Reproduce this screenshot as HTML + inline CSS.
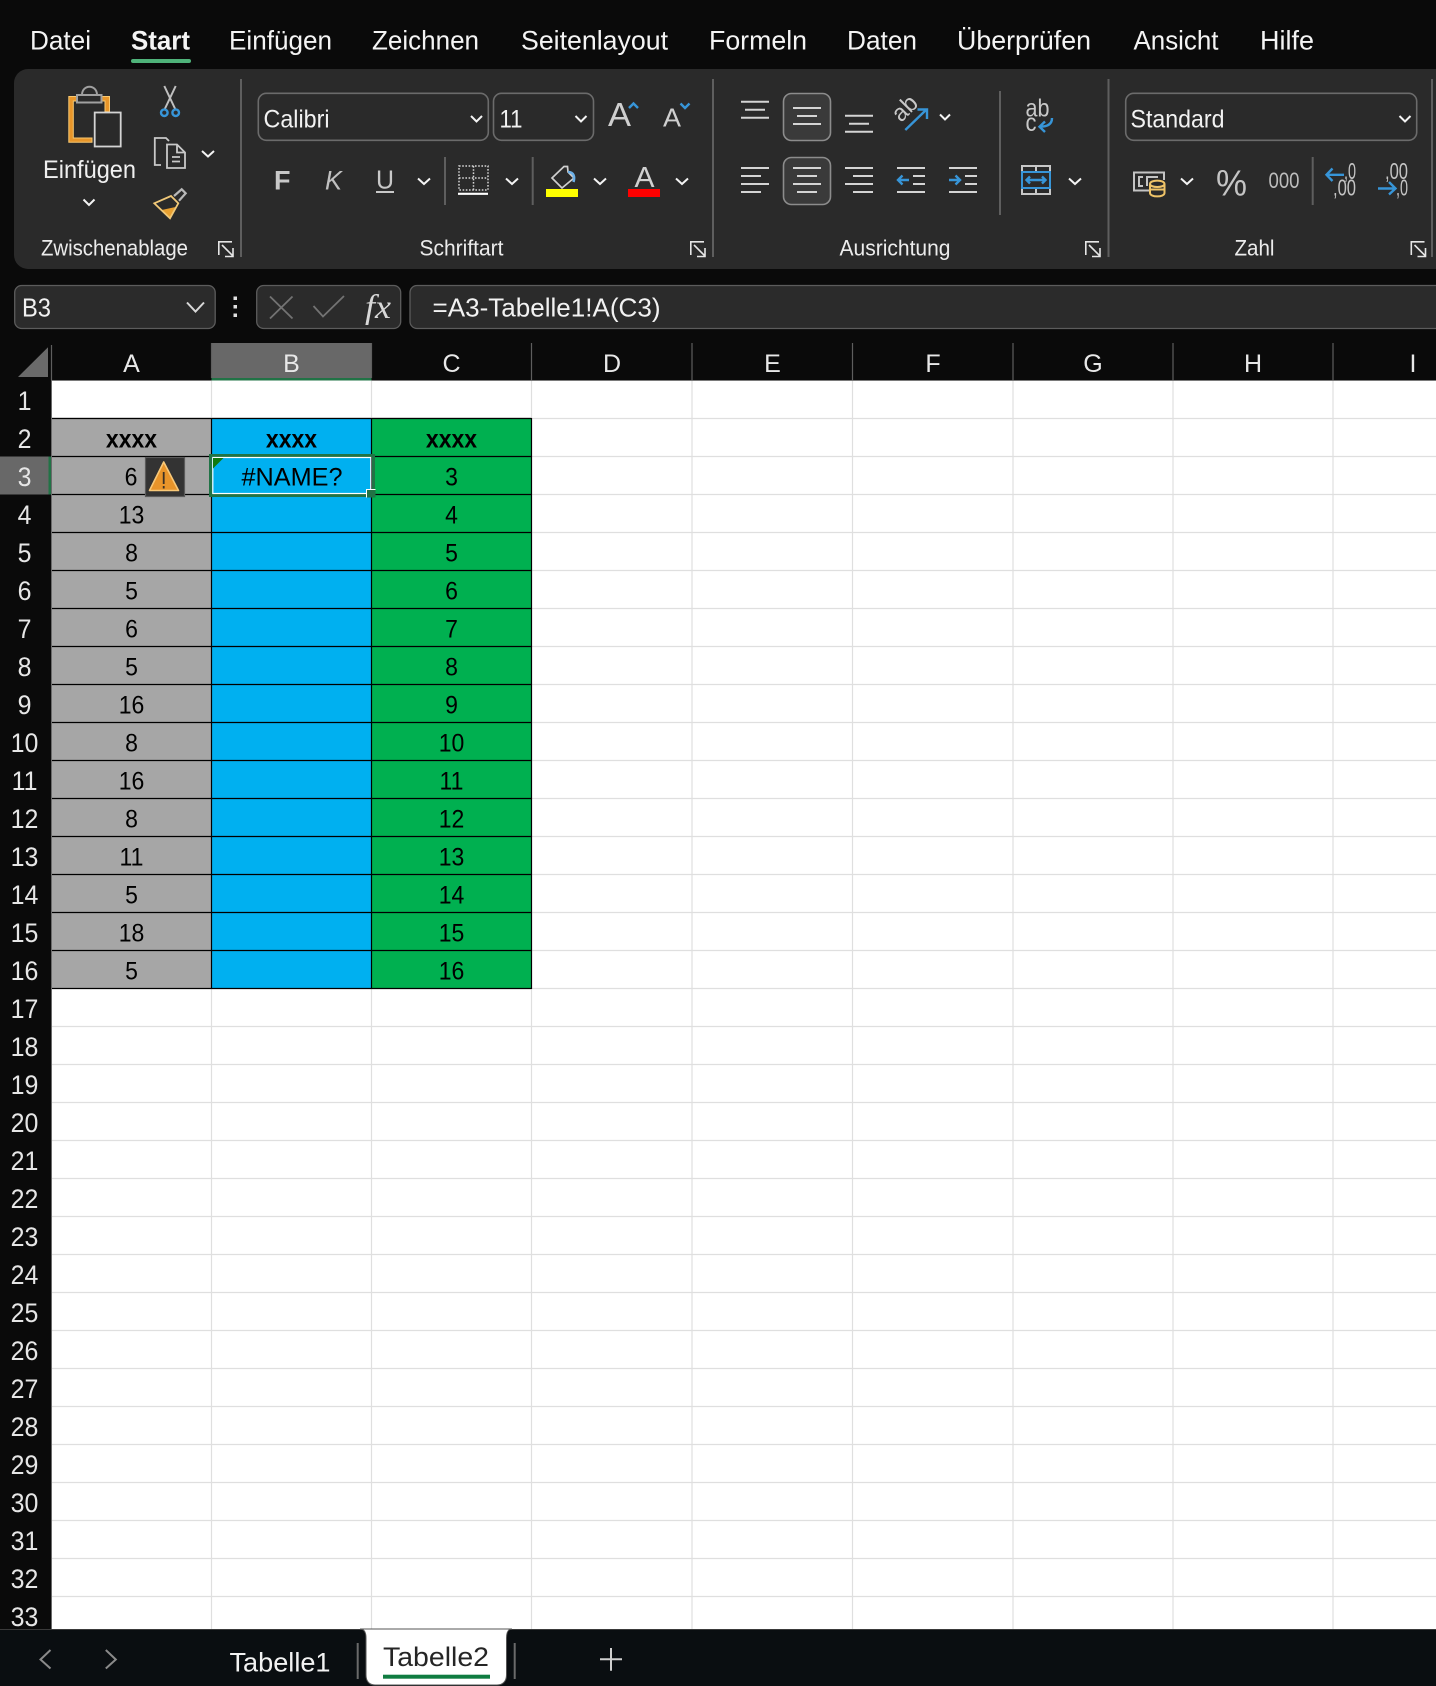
<!DOCTYPE html>
<html lang="de"><head><meta charset="utf-8"><title>Excel</title>
<style>
html,body{margin:0;padding:0;background:#0a0a0a;width:1436px;height:1686px;overflow:hidden}
svg{display:block}
text{font-family:"Liberation Sans",sans-serif}
.tab{font-size:27px;fill:#f4f4f4}
.lab{font-size:22px;fill:#ececec}
.inp{font-size:25px;fill:#f2f2f2}
.rh text{font-size:26.5px;fill:#e6e6e6;text-anchor:middle}
.ch text{font-size:25px;fill:#e8e8e8;text-anchor:middle}
.cell text{font-size:25px;fill:#000;text-anchor:middle}
.chev{fill:none;stroke:#f4f4f4;stroke-width:2}
.ln{fill:none;stroke:#d4d4d4;stroke-width:2}
.blue{fill:none;stroke:#3795d8;stroke-width:2.4}
.sep{stroke:#5e5e5e;stroke-width:2}
.box{fill:none;stroke:#6b6b6b;stroke-width:1.6}
.lc{fill:none;stroke:#e6e6e6;stroke-width:1.6}
</style></head>
<body>
<svg width="1436" height="1686" viewBox="0 0 1436 1686" xmlns="http://www.w3.org/2000/svg">
<rect width="1436" height="1686" fill="#0a0a0a"/>

<!-- Menu tabs -->
<text class="tab" x="30" y="49.500" textLength="61" lengthAdjust="spacingAndGlyphs">Datei</text>
<text class="tab" x="131" y="49.500" textLength="59" lengthAdjust="spacingAndGlyphs" style="font-weight:bold">Start</text>
<rect x="131" y="59" width="60" height="4" rx="2" fill="#4fb37a"/>
<text class="tab" x="229" y="49.500" textLength="103" lengthAdjust="spacingAndGlyphs">Einfügen</text>
<text class="tab" x="372" y="49.500" textLength="107" lengthAdjust="spacingAndGlyphs">Zeichnen</text>
<text class="tab" x="521" y="49.500" textLength="147" lengthAdjust="spacingAndGlyphs">Seitenlayout</text>
<text class="tab" x="709" y="49.500" textLength="98" lengthAdjust="spacingAndGlyphs">Formeln</text>
<text class="tab" x="847" y="49.500" textLength="70" lengthAdjust="spacingAndGlyphs">Daten</text>
<text class="tab" x="957" y="49.500" textLength="134" lengthAdjust="spacingAndGlyphs">Überprüfen</text>
<text class="tab" x="1133.500" y="49.500" textLength="85" lengthAdjust="spacingAndGlyphs">Ansicht</text>
<text class="tab" x="1260" y="49.500" textLength="54" lengthAdjust="spacingAndGlyphs">Hilfe</text>

<!-- Ribbon -->
<rect x="14" y="69" width="1450" height="200" rx="14" fill="#2a2a2a"/>
<path d="M241 79V257M713 79V257M1108.500 79V257M1432 79V257" stroke="#5e5e5e" stroke-width="2" fill="none"/>

<!-- Clipboard -->
<path d="M68.800 96.500H77V101H73.300V138H92V142.200H68.800Z M101 96.500H109.500V111.700H105V101H101Z" fill="#e8962a" stroke="#f8c870" stroke-width="1"/>
<path d="M82 95C82 84 97 84 97 95" fill="none" stroke="#a0a0a0" stroke-width="2"/>
<rect x="77" y="95" width="24.500" height="7.500" fill="#2a2a2a" stroke="#a0a0a0" stroke-width="2"/>
<rect x="94.700" y="112.500" width="26" height="34" fill="#2a2a2a" stroke="#d4d4d4" stroke-width="1.800"/>
<text x="43" y="178" style="font-size:25px;fill:#f0f0f0" textLength="93" lengthAdjust="spacingAndGlyphs">Einfügen</text>
<path class="chev" d="M83.500 199.500l5.500 5.500l5.500-5.500"/>
<!-- Scissors -->
<path d="M164.300 86L175.200 109M175.700 86L164.800 109" stroke="#c0c0c0" stroke-width="2" fill="none"/>
<circle cx="164.300" cy="112.700" r="3.300" fill="none" stroke="#3795d8" stroke-width="2.400"/>
<circle cx="175.700" cy="112.700" r="3.300" fill="none" stroke="#3795d8" stroke-width="2.400"/>
<!-- Copy -->
<path d="M161 165H154.800V138H166L169 141" fill="none" stroke="#c8c8c8" stroke-width="1.800"/>
<path d="M167 168V144.500H177L185 152.500V168Z M177 144.500V152.500H185" fill="none" stroke="#c8c8c8" stroke-width="1.800"/>
<path d="M172 157H180M172 161.500H180" stroke="#c8c8c8" stroke-width="1.800" fill="none"/>
<path class="chev" d="M202 151l6 5.500l6-5.500"/>
<!-- Painter -->
<path d="M161.700 210L176.700 206.700L170 218.300Z" fill="#e8a030"/>
<path d="M154.300 203.300L171 196L178.300 203.300L170 218.300Z" fill="none" stroke="#f0c878" stroke-width="1.800"/>
<path d="M174 196L181.700 189.300L185.700 193.300L179 200.700" fill="none" stroke="#b8b8b8" stroke-width="2.200"/>
<text class="lab" x="41" y="255.500" textLength="147" lengthAdjust="spacingAndGlyphs">Zwischenablage</text>
<g transform="translate(218 241)"><path class="lc" d="M.8 14V.8H14M4 4L15 15M15 7V15.500H7"/></g>

<!-- Font group -->
<rect class="box" x="258.300" y="93.300" width="230" height="47" rx="8"/>
<text class="inp" x="263.500" y="127.300" textLength="66" lengthAdjust="spacingAndGlyphs">Calibri</text>
<path class="chev" d="M471 116l5.500 5.500l5.500-5.500"/>
<rect class="box" x="493.500" y="93.300" width="100" height="47" rx="8"/>
<text class="inp" x="499.500" y="127.300" textLength="23" lengthAdjust="spacingAndGlyphs">11</text>
<path class="chev" d="M575.500 116l5.500 5.500l5.500-5.500"/>
<text x="608" y="126" style="font-size:33px;fill:#cfcfcf" textLength="23" lengthAdjust="spacingAndGlyphs">A</text>
<path class="blue" d="M629 108l4.500-4.500l4.500 4.500"/>
<text x="663" y="126.500" style="font-size:26px;fill:#cfcfcf" textLength="18" lengthAdjust="spacingAndGlyphs">A</text>
<path class="blue" d="M680.500 103.500l4.500 4.500l4.500-4.500"/>
<text x="274" y="189.300" style="font-size:27px;font-weight:bold;fill:#c8c8c8">F</text>
<text x="325" y="189.300" style="font-size:27px;font-style:italic;fill:#c0c0c0" textLength="17" lengthAdjust="spacingAndGlyphs">K</text>
<text x="376" y="188.500" style="font-size:26px;fill:#c8c8c8" textLength="18" lengthAdjust="spacingAndGlyphs">U</text>
<path d="M376 192H394" stroke="#c8c8c8" stroke-width="2"/>
<path class="chev" d="M418 178.500l6 5.500l6-5.500"/>
<path class="sep" d="M445 157V205M532.700 157V205M1312.700 157V205"/>
<path d="M459 166H488V190H459ZM473.500 166V190M459 178H488" fill="none" stroke="#d4d4d4" stroke-width="1.500" stroke-dasharray="1.600 1.600"/>
<path d="M458 193.800H488" stroke="#fff" stroke-width="2.200"/>
<path class="chev" d="M506 178.500l6 5.500l6-5.500"/>
<path d="M552 178L564 166.500L567.500 166.500L568 172L574 178L562 188Z" fill="none" stroke="#cfcfcf" stroke-width="1.700"/>
<path d="M568 172C574 172 575 177 573.500 182" fill="none" stroke="#6cb0e8" stroke-width="2.500"/>
<rect x="546" y="189" width="32" height="8" fill="#ffff00"/>
<path class="chev" d="M594 178.500l6 5.500l6-5.500"/>
<text x="634.500" y="187" style="font-size:29px;fill:#d0d0d0" textLength="20" lengthAdjust="spacingAndGlyphs">A</text>
<rect x="628" y="189" width="32" height="8" fill="#ff0000"/>
<path class="chev" d="M676 178.500l6 5.500l6-5.500"/>
<text class="lab" x="419.500" y="255.500" textLength="84" lengthAdjust="spacingAndGlyphs">Schriftart</text>
<g transform="translate(690 241)"><path class="lc" d="M.8 14V.8H14M4 4L15 15M15 7V15.500H7"/></g>

<!-- Alignment -->
<path class="ln" d="M741 101.700H769M745 109.700H765M741 117.700H769"/>
<rect x="783.500" y="93.500" width="47" height="47" rx="8" fill="#3a3a3a" stroke="#8c8c8c" stroke-width="1.600"/>
<path class="ln" d="M793 108H821M797 116H817M793 124H821"/>
<path class="ln" d="M845 115.700H873M849 123.700H869M845 131.700H873"/>
<text transform="translate(901 123) rotate(-45)" style="font-size:24px;fill:#c8c8c8" textLength="26" lengthAdjust="spacingAndGlyphs">ab</text>
<path class="blue" d="M905.300 130L926.500 109.500M917.500 109.500H927V119"/>
<path class="chev" d="M940 114.500l5 5l5-5"/>
<path class="sep" d="M1000 91V215"/>
<text x="1025.500" y="116.700" style="font-size:25px;fill:#c8c8c8" textLength="24" lengthAdjust="spacingAndGlyphs">ab</text>
<text x="1025.500" y="131" style="font-size:25px;fill:#c8c8c8" textLength="11" lengthAdjust="spacingAndGlyphs">c</text>
<path class="blue" d="M1052 118C1052 124 1048 126.700 1040 126.700M1045 121.500L1039.500 126.700L1045 132"/>
<path class="ln" d="M741 168H769M741 176H761M741 184H769M741 192H761"/>
<rect x="783.500" y="157.500" width="47" height="47" rx="8" fill="#3a3a3a" stroke="#8c8c8c" stroke-width="1.600"/>
<path class="ln" d="M793 168H821M797 176H817M793 184H821M797 192H817"/>
<path class="ln" d="M845 168H873M853 176H873M845 184H873M853 192H873"/>
<path class="ln" d="M897 168H925M913 176H925M913 184H925M897 192H925"/>
<path class="blue" d="M898 180H909M902.500 175.500L898 180L902.500 184.500"/>
<path class="ln" d="M949 168H977M965 176H977M965 184H977M949 192H977"/>
<path class="blue" d="M949 180H960M955.500 175.500L960 180L955.500 184.500"/>
<path d="M1022 166H1050V194H1022ZM1036 166V172M1036 188V194" fill="none" stroke="#c8c8c8" stroke-width="2"/>
<rect x="1022" y="172" width="28" height="16" fill="#2a2a2a" stroke="#3795d8" stroke-width="2"/>
<path class="blue" d="M1026.500 180H1045.500M1030 176.500L1026.500 180L1030 183.500M1042 176.500L1045.500 180L1042 183.500"/>
<path class="chev" d="M1069 178.500l6 5.500l6-5.500"/>
<text class="lab" x="839.500" y="255.500" textLength="111" lengthAdjust="spacingAndGlyphs">Ausrichtung</text>
<g transform="translate(1085 241)"><path class="lc" d="M.8 14V.8H14M4 4L15 15M15 7V15.500H7"/></g>

<!-- Number -->
<rect class="box" x="1125.700" y="93.300" width="291" height="47" rx="8"/>
<text class="inp" x="1130.500" y="127.300" textLength="94" lengthAdjust="spacingAndGlyphs">Standard</text>
<path class="chev" d="M1399.500 116l5.500 5.500l5.500-5.500"/>
<path d="M1150 190.500H1134V172.500H1164V180M1143 177H1139V186H1143M1147 186V177H1158" fill="none" stroke="#c4c4c4" stroke-width="2"/>
<path d="M1150 184C1150 179.500 1164.500 179.500 1164.500 184V193C1164.500 197.500 1150 197.500 1150 193ZM1150 184C1150 188 1164.500 188 1164.500 184M1150 189.500H1164.500" fill="#2a2a2a" stroke="#f0c468" stroke-width="2"/>
<path class="chev" d="M1181 178.500l6 5.500l6-5.500"/>
<text x="1216" y="195.500" style="font-size:36px;fill:#c4c4c4" textLength="31" lengthAdjust="spacingAndGlyphs">%</text>
<text x="1268.500" y="187.800" style="font-size:22px;fill:#bdbdbd" textLength="31" lengthAdjust="spacingAndGlyphs">000</text>
<path class="blue" d="M1326.500 174.800H1344M1332.500 168.500L1326.500 174.800L1332.500 181"/>
<text x="1344" y="179" style="font-size:23px;fill:#c4c4c4" textLength="12" lengthAdjust="spacingAndGlyphs">,0</text>
<text x="1333" y="195.500" style="font-size:23px;fill:#c4c4c4" textLength="23" lengthAdjust="spacingAndGlyphs">,00</text>
<text x="1385" y="179" style="font-size:23px;fill:#c4c4c4" textLength="23" lengthAdjust="spacingAndGlyphs">,00</text>
<path class="blue" d="M1378 188.500H1395M1389 182L1395.500 188.500L1389 194.500"/>
<text x="1396" y="195.500" style="font-size:23px;fill:#c4c4c4" textLength="12" lengthAdjust="spacingAndGlyphs">,0</text>
<text class="lab" x="1234.500" y="255.500" textLength="40" lengthAdjust="spacingAndGlyphs">Zahl</text>
<g transform="translate(1410.500 241)"><path class="lc" d="M.8 14V.8H14M4 4L15 15M15 7V15.500H7"/></g>

<!-- Formula bar -->
<rect x="14.700" y="285.500" width="200.500" height="43" rx="7" fill="#2b2b2b" stroke="#5c5c5c" stroke-width="1.300"/>
<text x="22" y="316.500" style="font-size:26px;fill:#f2f2f2" textLength="29" lengthAdjust="spacingAndGlyphs">B3</text>
<path d="M187 302.500L195.500 311.500L204 302.500" fill="none" stroke="#d8d8d8" stroke-width="2"/>
<rect x="233.500" y="296.500" width="3.500" height="3.500" fill="#e0e0e0"/><rect x="233.500" y="305" width="3.500" height="3.500" fill="#e0e0e0"/><rect x="233.500" y="313.500" width="3.500" height="3.500" fill="#e0e0e0"/>
<rect x="256.700" y="285.500" width="144" height="43" rx="7" fill="#2b2b2b" stroke="#5c5c5c" stroke-width="1.300"/>
<path d="M270 296.500L292.500 318.500M292.500 296.500L270 318.500M313.500 306L323 316.500L344 296" fill="none" stroke="#737373" stroke-width="1.800"/>
<text x="365" y="318" style="font-family:'Liberation Serif',serif;font-style:italic;font-size:34px;fill:#d8d8d8" textLength="26" lengthAdjust="spacingAndGlyphs">fx</text>
<rect x="410" y="285.500" width="1040" height="43" rx="7" fill="#2b2b2b" stroke="#5c5c5c" stroke-width="1.300"/>
<text x="432.500" y="316.500" style="font-size:26px;fill:#f2f2f2" textLength="228" lengthAdjust="spacingAndGlyphs">=A3-Tabelle1!A(C3)</text>

<!-- Sheet -->
<rect x="51.500" y="380" width="1385" height="1249" fill="#fff"/>
<rect x="51.500" y="418" width="160" height="570" fill="#a6a6a6"/>
<rect x="211.500" y="418" width="160" height="570" fill="#00b0f0"/>
<rect x="371.500" y="418" width="160" height="570" fill="#00b050"/>
<!-- grid -->
<path d="M531.500 418.500H1436M531.500 456.500H1436M531.500 494.500H1436M531.500 532.500H1436M531.500 570.500H1436M531.500 608.500H1436M531.500 646.500H1436M531.500 684.500H1436M531.500 722.500H1436M531.500 760.500H1436M531.500 798.500H1436M531.500 836.500H1436M531.500 874.500H1436M531.500 912.500H1436M531.500 950.500H1436M531.500 988.500H1436M52 1026.500H1436M52 1064.500H1436M52 1102.500H1436M52 1140.500H1436M52 1178.500H1436M52 1216.500H1436M52 1254.500H1436M52 1292.500H1436M52 1330.500H1436M52 1368.500H1436M52 1406.500H1436M52 1444.500H1436M52 1482.500H1436M52 1520.500H1436M52 1558.500H1436M52 1596.500H1436M52 418H531.500M211.500 380V418M371.500 380V418M531.500 380V418M211.500 988V1629M371.500 988V1629M531.500 988V1629M692 380V1629M852.500 380V1629M1013 380V1629M1173 380V1629M1333 380V1629" stroke="#dfdfdf" stroke-width="1.200" fill="none"/>
<path d="M51.500 418.500H531.500M51.500 456.500H531.500M51.500 494.500H531.500M51.500 532.500H531.500M51.500 570.500H531.500M51.500 608.500H531.500M51.500 646.500H531.500M51.500 684.500H531.500M51.500 722.500H531.500M51.500 760.500H531.500M51.500 798.500H531.500M51.500 836.500H531.500M51.500 874.500H531.500M51.500 912.500H531.500M51.500 950.500H531.500M51.500 988.500H531.500M211.500 418V989M371.500 418V989M531.500 418V989" stroke="#000" stroke-width="1.200" fill="none"/>

<!-- Column headers -->
<rect x="0" y="343" width="1436" height="37" fill="#0a0a0a"/>
<path d="M18 377H48V347.300Z" fill="#6a6a6a"/>
<rect x="211.500" y="343" width="160" height="35" fill="#686868"/>
<rect x="211.500" y="378" width="160" height="2.500" fill="#217346"/>
<path d="M51.500 345V380M211.500 343V378M371.500 343V378M531.500 343V380M692 343V380M852.500 343V380M1013 343V380M1173 343V380M1333 343V380" stroke="#5e5e5e" stroke-width="1.200" fill="none"/>
<path d="M0 380.500H211.500M371.500 380.500H1436" stroke="#7a7a7a" stroke-width="1"/>
<g class="ch">
<text x="131.500" y="372">A</text><text x="291.500" y="372">B</text><text x="451.500" y="372">C</text><text x="612" y="372">D</text><text x="772.500" y="372">E</text><text x="933" y="372">F</text><text x="1093" y="372">G</text><text x="1253" y="372">H</text><text x="1413" y="372">I</text>
</g>

<!-- Row headers -->
<rect x="0" y="380" width="51.500" height="1249" fill="#0a0a0a"/>
<rect x="0" y="456.500" width="48.500" height="38" fill="#686868"/>
<rect x="48.500" y="456.500" width="3" height="38" fill="#217346"/>
<path d="M51.500 380V1629" stroke="#6a6a6a" stroke-width="1"/>
<g class="rh" transform="translate(24.500 0) scale(.94 1)">
<text x="0" y="410">1</text><text x="0" y="448">2</text><text x="0" y="486">3</text><text x="0" y="524">4</text><text x="0" y="562">5</text><text x="0" y="600">6</text><text x="0" y="638">7</text><text x="0" y="676">8</text><text x="0" y="714">9</text><text x="0" y="752">10</text><text x="0" y="790">11</text><text x="0" y="828">12</text><text x="0" y="866">13</text><text x="0" y="904">14</text><text x="0" y="942">15</text><text x="0" y="980">16</text><text x="0" y="1018">17</text><text x="0" y="1056">18</text><text x="0" y="1094">19</text><text x="0" y="1132">20</text><text x="0" y="1170">21</text><text x="0" y="1208">22</text><text x="0" y="1246">23</text><text x="0" y="1284">24</text><text x="0" y="1322">25</text><text x="0" y="1360">26</text><text x="0" y="1398">27</text><text x="0" y="1436">28</text><text x="0" y="1474">29</text><text x="0" y="1512">30</text><text x="0" y="1550">31</text><text x="0" y="1588">32</text><text x="0" y="1626">33</text>
</g>

<!-- Cell text -->
<g class="cell" transform="translate(131.500 0) scale(.92 1)">
<text x="0" y="447.500" style="font-weight:bold">xxxx</text>
<text x="0" y="523.700">13</text><text x="0" y="561.700">8</text><text x="0" y="599.700">5</text><text x="0" y="637.700">6</text><text x="0" y="675.700">5</text><text x="0" y="713.700">16</text><text x="0" y="751.700">8</text><text x="0" y="789.700">16</text><text x="0" y="827.700">8</text><text x="0" y="865.700">11</text><text x="0" y="903.700">5</text><text x="0" y="941.700">18</text><text x="0" y="979.700">5</text>
</g>
<g class="cell" transform="translate(131 0) scale(.92 1)"><text x="0" y="485.700">6</text></g>
<g class="cell" transform="translate(291.500 0) scale(.92 1)"><text x="0" y="447.500" style="font-weight:bold">xxxx</text></g>
<g class="cell" transform="translate(451.500 0) scale(.92 1)">
<text x="0" y="447.500" style="font-weight:bold">xxxx</text>
<text x="0" y="485.700">3</text><text x="0" y="523.700">4</text><text x="0" y="561.700">5</text><text x="0" y="599.700">6</text><text x="0" y="637.700">7</text><text x="0" y="675.700">8</text><text x="0" y="713.700">9</text><text x="0" y="751.700">10</text><text x="0" y="789.700">11</text><text x="0" y="827.700">12</text><text x="0" y="865.700">13</text><text x="0" y="903.700">14</text><text x="0" y="941.700">15</text><text x="0" y="979.700">16</text>
</g>

<!-- Warning tile -->
<rect x="145.500" y="457.500" width="39" height="39" fill="#333" stroke="#5a5a5a" stroke-width="1.200"/>
<path d="M163.700 462L178.500 490.500H149.500Z" fill="#e8942a" stroke="#f8c878" stroke-width="1.600" stroke-linejoin="round"/>
<path d="M163.700 472V484M163.700 486V488.500" stroke="#3a3026" stroke-width="1.800"/>

<!-- Selection -->
<rect x="210.500" y="455.500" width="163" height="40" fill="none" stroke="#217346" stroke-width="3"/>
<rect x="212.800" y="457.500" width="158" height="36" fill="none" stroke="#fff" stroke-width="1.200"/>
<path d="M213 458H223.500L213 468.500Z" fill="#0f7a0f"/>
<text x="241.500" y="485.700" textLength="101" lengthAdjust="spacingAndGlyphs" style="font-size:25px;fill:#000">#NAME?</text>
<rect x="366.500" y="489.500" width="9" height="8" fill="#217346"/>
<path d="M366.500 497.500V489.500H375.500" fill="none" stroke="#fff" stroke-width="1"/>

<!-- Sheet tabs -->
<rect x="0" y="1629" width="1436" height="57" fill="#0a0e11"/>
<path d="M0 1629.500H1436" stroke="#3a3a3a" stroke-width="1"/>
<path d="M360 1629H512C507 1629 506.500 1634 506.500 1638V1675C506.500 1681 503 1685 497 1685H375C369 1685 366 1681 366 1675V1638C366 1634 365 1629 360 1629Z" fill="#fff" stroke="#555" stroke-width="1"/>
<path d="M50.500 1650L40.500 1659.500L50.500 1668.500M105.800 1650L115.800 1659.500L105.800 1668.500" fill="none" stroke="#8a8a8a" stroke-width="2"/>
<text x="229.500" y="1671.500" style="font-size:27px;fill:#f2f2f2" textLength="101" lengthAdjust="spacingAndGlyphs">Tabelle1</text>
<path d="M357.700 1643V1679M514.700 1643V1679" stroke="#6a6a6a" stroke-width="2"/>
<text x="383" y="1666" style="font-size:27px;fill:#252525" textLength="106" lengthAdjust="spacingAndGlyphs">Tabelle2</text>
<rect x="383" y="1674.700" width="107" height="4" fill="#107c41"/>
<path d="M600 1659.300H622M611 1648V1670.700" stroke="#cfcfcf" stroke-width="2"/>
</svg>
</body></html>
